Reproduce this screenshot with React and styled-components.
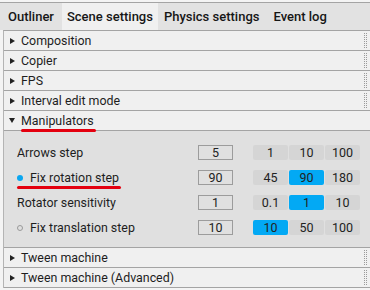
import React from "react";
import styled, { createGlobalStyle } from "styled-components";

const Global = createGlobalStyle`
  html, body {
    margin: 0;
    padding: 0;
    background: #f4f4f4;
  }
  body {
    font-family: Roboto, "Liberation Sans", sans-serif;
    color: #1e1e1e;
  }
`;

const Frame = styled.div`
  width: 370px;
  height: 290px;
  padding-top: 2px;
  box-sizing: border-box;
  overflow: hidden;
`;

const TabBar = styled.div`
  display: flex;
  height: 27px;
  border-top: 1px solid #a4a4a4;
  background: #e2e2e2;
`;

const Tab = styled.div`
  display: flex;
  align-items: center;
  padding: 0 ${(p) => p.$pad || 7}px;
  font-size: 13px;
  font-weight: 500;
  color: #161616;
  background: ${(p) => (p.$active ? "#f0f0f0" : "transparent")};
`;

const Panel = styled.div`
  margin-left: 3px;
  border-left: 1px solid #b4b4b4;
  border-top: 1px solid #a4a4a4;
`;

const Header = styled.div`
  position: relative;
  display: flex;
  align-items: center;
  height: 19px;
  padding-left: 5px;
  background: #f0f0f0;
  border-bottom: 1px solid #a4a4a4;
  font-size: 12.4px;
  color: #1e1e1e;
`;

const Arrow = styled.span`
  width: 0;
  height: 0;
  ${(p) =>
    p.$open
      ? `border-left: 3.5px solid transparent;
         border-right: 3.5px solid transparent;
         border-top: 5px solid #222;
         margin-right: 6px;`
      : `border-top: 3.5px solid transparent;
         border-bottom: 3.5px solid transparent;
         border-left: 5px solid #222;
         margin-left: 1px;
         margin-right: 6px;`}
`;

const Underlined = styled.span`
  position: relative;
  &::after {
    content: "";
    position: absolute;
    left: ${(p) => p.$left || 0}px;
    right: -2px;
    bottom: -4px;
    height: 3px;
    border-radius: 2px;
    background: #e4000f;
  }
`;

const Grip = styled.svg`
  position: absolute;
  right: 2px;
  top: 2px;
`;

const Body = styled.div`
  background: #e0e0e0;
  border-bottom: 1px solid #a4a4a4;
  padding: 14px 0 12px 13px;
  display: flex;
  flex-direction: column;
  gap: 10px;
`;

const Row = styled.div`
  display: grid;
  grid-template-columns: 181px 35px 127px;
  align-items: center;
  height: 15px;
`;

const Label = styled.div`
  display: flex;
  align-items: center;
  font-size: 12.4px;
  color: #1e1e1e;
  white-space: nowrap;
`;

const Dot = styled.span`
  width: 6px;
  height: 6px;
  border-radius: 50%;
  margin-right: 7px;
  box-sizing: border-box;
  background: ${(p) => (p.$on ? "#0aa6f0" : "transparent")};
  border: ${(p) => (p.$on ? "none" : "1px solid #9a9a9a")};
`;

const Field = styled.div`
  height: 15px;
  box-sizing: border-box;
  border: 1px solid #9c9c9c;
  display: flex;
  align-items: center;
  justify-content: center;
  font-size: 12.5px;
  color: #222;
`;

const Group = styled.div`
  display: flex;
  gap: 1px;
  margin-left: 20px;
`;

const Choice = styled.div`
  width: 35px;
  height: 15px;
  border-radius: 2px;
  display: flex;
  align-items: center;
  justify-content: center;
  font-size: 12.5px;
  color: #222;
  background: ${(p) => (p.$on ? "#03a9f4" : "#d5d5d5")};
`;

const GripIcon = () => (
  <Grip width="4" height="15" viewBox="0 0 4 15">
    {[0, 2, 4, 6, 8, 10, 12, 14].map((y) => (
      <g key={y}>
        <rect x="0" y={y} width="1" height="1" fill="#9a9a9a" />
        <rect x="2" y={y} width="1" height="1" fill="#9a9a9a" />
      </g>
    ))}
  </Grip>
);

const Section = ({ title, open, marked }) => (
  <Header>
    <Arrow $open={open} />
    {marked ? <Underlined>{title}</Underlined> : title}
    {!open && <GripIcon />}
  </Header>
);

const rows = [
  { label: "Arrows step", value: "5", options: ["1", "10", "100"], active: -1 },
  { label: "Fix rotation step", dot: "on", marked: true, value: "90", options: ["45", "90", "180"], active: 1 },
  { label: "Rotator sensitivity", value: "1", options: ["0.1", "1", "10"], active: 1 },
  { label: "Fix translation step", dot: "off", value: "10", options: ["10", "50", "100"], active: 0 },
];

export default function App() {
  return (
    <Frame>
      <Global />
      <TabBar>
        <Tab $pad={8}>Outliner</Tab>
        <Tab $active $pad={5}>Scene settings</Tab>
        <Tab $pad={6}>Physics settings</Tab>
        <Tab $pad={8}>Event log</Tab>
      </TabBar>
      <Panel>
        <Section title="Composition" />
        <Section title="Copier" />
        <Section title="FPS" />
        <Section title="Interval edit mode" />
        <Section title="Manipulators" open marked />
        <Body>
          {rows.map((r) => (
            <Row key={r.label}>
              <Label>
                {r.dot && <Dot $on={r.dot === "on"} />}
                {r.marked ? <Underlined $left={-13}>{r.label}</Underlined> : r.label}
              </Label>
              <Field>{r.value}</Field>
              <Group>
                {r.options.map((o, i) => (
                  <Choice key={o} $on={i === r.active}>
                    {o}
                  </Choice>
                ))}
              </Group>
            </Row>
          ))}
        </Body>
        <Section title="Tween machine" />
        <Section title="Tween machine (Advanced)" />
      </Panel>
    </Frame>
  );
}
